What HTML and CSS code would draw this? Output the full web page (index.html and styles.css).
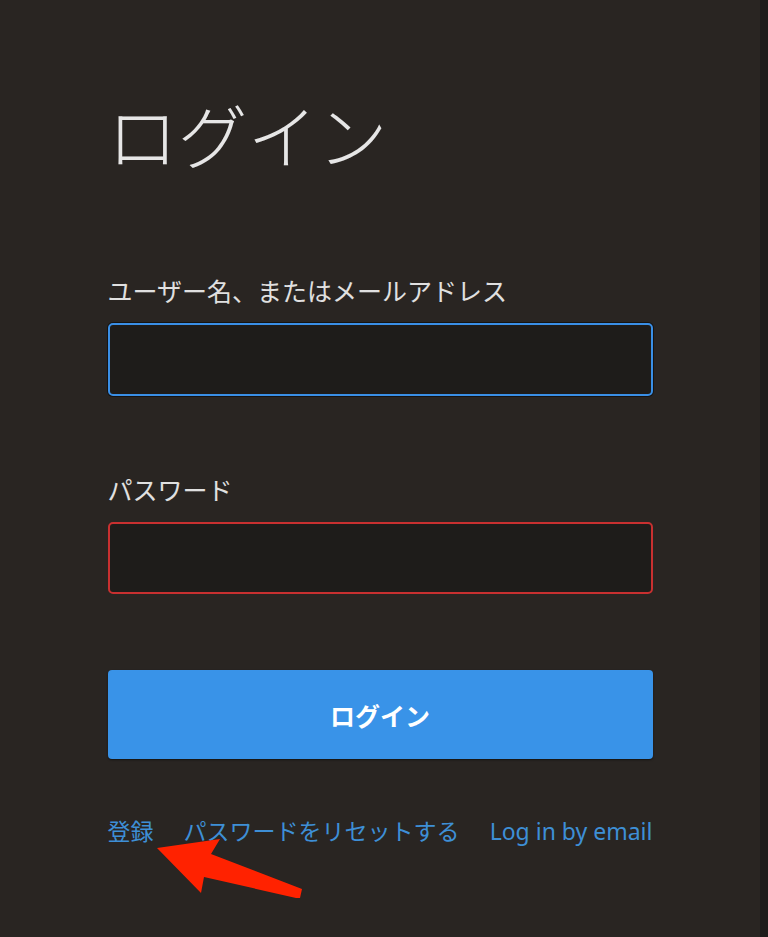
FILE: index.html
```html
<!DOCTYPE html>
<html lang="ja">
<head>
<meta charset="utf-8">
<title>ログイン</title>
<link rel="stylesheet" href="styles.css">
</head>
<body>
<div class="page">
  <main class="content">
    <form class="login">
      <h1 class="title">ログイン</h1>
      <label class="label label-first" for="user">ユーザー名、またはメールアドレス</label>
      <input class="field field-focus" id="user" type="text">
      <label class="label" for="pass">パスワード</label>
      <input class="field field-error" id="pass" type="password">
      <button class="submit" type="button">ログイン</button>
      <nav class="links">
        <a href="#">登録</a>
        <a href="#">パスワードをリセットする</a>
        <a href="#">Log in by email</a>
      </nav>
    </form>
  </main>
  <div class="scrollbar"></div>
</div>
<svg class="arrow" width="768" height="937" viewBox="0 0 768 937">
  <polygon points="157,848 220,839 211,854 302,889 300,898 296,898 204,877 201,893" fill="#ff2200"/>
</svg>
</body>
</html>
```

FILE: styles.css
```css
html, body {
  margin: 0;
  padding: 0;
  background: #292522;
}
body {
  font-family: "Noto Sans", "Noto Sans CJK JP", sans-serif;
  color: #dcdcdc;
}
.page {
  display: flex;
  width: 768px;
  height: 937px;
}
.content {
  flex: 1;
  display: flex;
  justify-content: center;
}
.scrollbar {
  width: 8px;
  background: #1e1c1b;
}
.login {
  width: 545px;
  display: flex;
  flex-direction: column;
  padding-top: 80px;
}
.title {
  margin: 0;
  font-size: 70px;
  line-height: 108px;
  font-weight: 300;
  color: #e6e6e6;
  font-family: "Noto Sans CJK JP", sans-serif;
}
.label {
  font-size: 25px;
  line-height: 36px;
  color: #e0e0e0;
  margin-top: 76px;
  margin-bottom: 14px;
}
.label-first {
  margin-top: 85px;
}
.field {
  box-sizing: border-box;
  height: 73px;
  width: 100%;
  background: #1e1c1a;
  border-radius: 5px;
  margin: 0;
  outline: none;
}
.field-focus {
  border: 2.5px solid #3a8fe6;
  box-shadow: 0 0 0 1px #151413;
}
.field-error {
  height: 72px;
  border: 2px solid #c83030;
}
.submit {
  margin-top: 76px;
  height: 89px;
  width: 100%;
  border: none;
  border-radius: 4px;
  background: #3993e8;
  color: #ffffff;
  font-family: "Noto Sans CJK JP", sans-serif;
  font-size: 25px;
  font-weight: 700;
  box-shadow: 0 1px 2px rgba(0,0,0,0.5);
}
.links {
  margin-top: 56px;
  display: flex;
  justify-content: space-between;
  font-size: 23px;
  line-height: 32px;
}
.links a {
  color: #3e8fd6;
  text-decoration: none;
}
.arrow {
  position: absolute;
  left: 0;
  top: 0;
  pointer-events: none;
}
```
